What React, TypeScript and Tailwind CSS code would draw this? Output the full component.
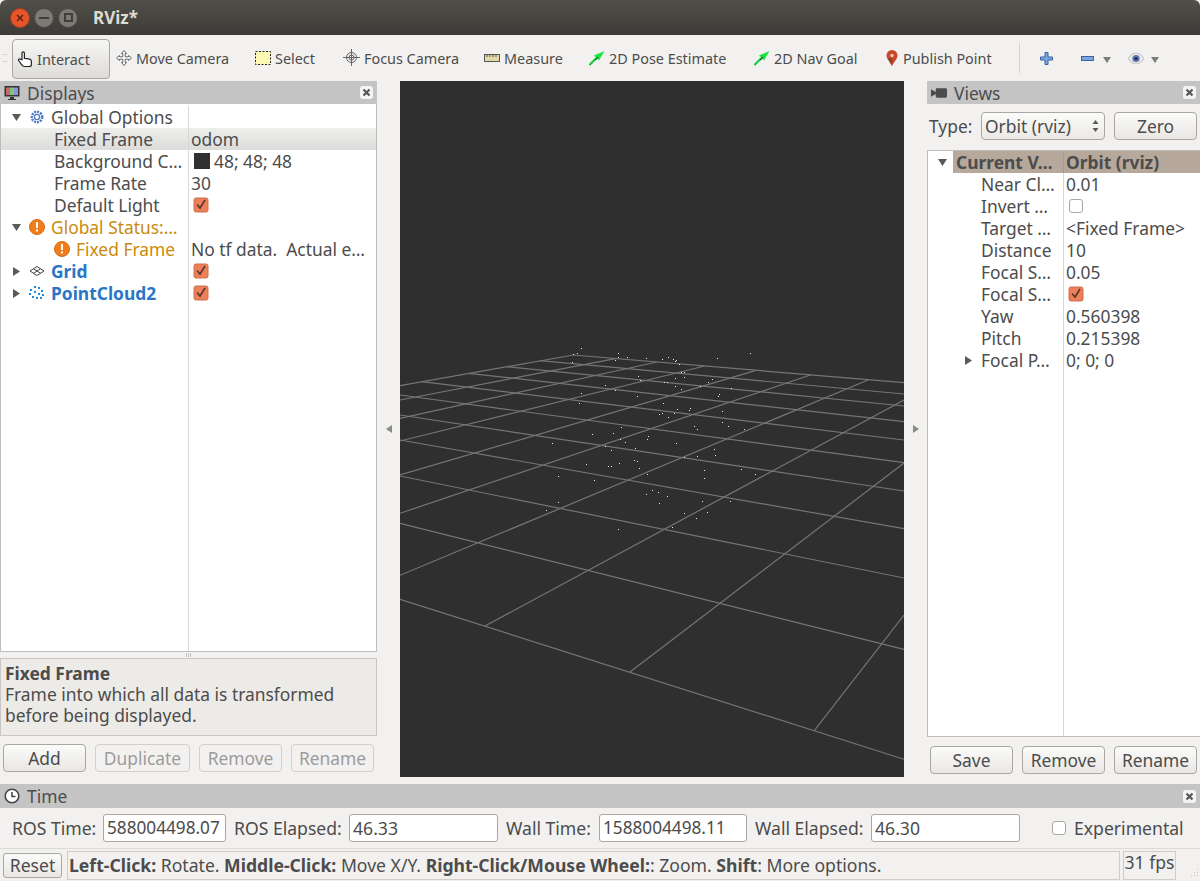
import type { ReactNode } from 'react';

const FONT = "font-['Noto_Sans','Open_Sans',sans-serif]";

// grid lines, screen coordinates inside the 3d view
const GRID_LINES = [
  [573.3, 355, 904, 382.7], [540, 360.7, 904, 394], [506.7, 366.7, 904, 406], [468.3, 373.3, 904, 421.7],
  [421.7, 381.7, 904, 440], [400, 395, 904, 462.7], [400, 415, 904, 491], [400, 440, 904, 528.7],
  [400, 476, 904, 578], [400, 523.3, 904, 649.3], [400, 599.3, 904, 759.3],
  [400, 385.7, 573.3, 355], [400, 400, 616.7, 358.3], [400, 418.3, 657, 362], [400, 441, 704.7, 366],
  [400, 475, 755.3, 370.7], [400, 513.3, 810.3, 375], [400, 575.3, 868, 380], [485, 626, 904, 400],
  [630, 672, 904, 463], [814.3, 730.7, 904, 615],
];

const POINTS = [
  [581, 348], [573, 354], [577, 353], [618, 353], [618, 357], [615, 360], [627, 357], [646, 358], [572, 362],
  [638, 376], [640, 380], [605, 385], [615, 390], [581, 393], [637, 396], [579, 403], [621, 427], [592, 434],
  [613, 433], [620, 439], [648, 436], [647, 439], [625, 442], [552, 443], [605, 446], [635, 448], [611, 450],
  [619, 463], [634, 460], [637, 461], [586, 464], [608, 466], [611, 466], [662, 359], [668, 357], [673, 359],
  [675, 361], [676, 360], [679, 364], [717, 358], [750, 353], [681, 372], [684, 372], [675, 378], [684, 377],
  [712, 379], [708, 382], [664, 382], [667, 382], [675, 386], [681, 389], [700, 386], [731, 388], [719, 394],
  [718, 396], [663, 403], [677, 409], [690, 408], [689, 410], [722, 411], [662, 413], [659, 414], [674, 413],
  [668, 417], [722, 422], [694, 426], [697, 429], [728, 426], [744, 429], [676, 443], [714, 449], [697, 456],
  [715, 455], [684, 457], [704, 470], [741, 469], [558, 502], [546, 510], [659, 503], [702, 501], [730, 501],
  [684, 513], [707, 512], [696, 518], [618, 529], [672, 527], [558, 476], [594, 480], [647, 474], [704, 478],
  [755, 474], [646, 494], [652, 490], [658, 492], [667, 496], [639, 468],
];

function Triangle({ dir }: { dir: 'down' | 'right' }) {
  return (
    <svg width="9" height="9" viewBox="0 0 9 9" className="shrink-0">
      {dir === 'down' ? <path d="M0 1h9L4.5 8z" fill="#5a5a56" /> : <path d="M1 0v9l7-4.5z" fill="#5a5a56" />}
    </svg>
  );
}

function Check() {
  return (
    <svg width="16" height="16" viewBox="0 0 16 16" className="shrink-0">
      <rect x="1" y="1" width="14" height="14" rx="2" fill="#ef7f58" stroke="#c9704f" />
      <path d="M4 7.5l3 3.5 5-8" fill="none" stroke="#5a3a30" strokeWidth="1.7" />
    </svg>
  );
}

function Warn() {
  return (
    <svg width="16" height="16" viewBox="0 0 16 16" className="shrink-0">
      <circle cx="8" cy="8" r="7.5" fill="#f07d1c" stroke="#d96a10" />
      <rect x="7" y="3" width="2" height="6" fill="#fff" />
      <rect x="7" y="10.5" width="2" height="2" fill="#fff" />
    </svg>
  );
}

function CloseBtn() {
  return (
    <div className="w-[13px] h-[13px] rounded-[3px] bg-[#f4f4f4] flex items-center justify-center">
      <svg width="9" height="9" viewBox="0 0 9 9">
        <path d="M1.5 1.5l6 6M7.5 1.5l-6 6" stroke="#555" strokeWidth="2.2" />
      </svg>
    </div>
  );
}

function PanelHeader({ icon, title }: { icon: ReactNode; title: string }) {
  return (
    <div className="h-[23px] shrink-0 bg-[#c4c4c4] flex items-center pl-[4px] pr-[4px] text-[#4c4c4c] text-[17.4px]">
      <div className="w-[16px] flex justify-center">{icon}</div>
      <span className="ml-[7px] mt-[2px] flex-1">{title}</span>
      <CloseBtn />
    </div>
  );
}

function Btn({ children, w, off }: { children: ReactNode; w: string; off?: boolean }) {
  return (
    <div
      className={`${w} h-[28px] shrink-0 rounded-[4px] border flex items-center justify-center text-[17.4px] bg-linear-to-b ${
        off ? 'border-[#d2d0cc] from-[#f2f1f0] to-[#f2f1f0] text-[#9c9c9c]' : 'border-[#a9a7a3] from-[#fbfbfa] to-[#e9e7e4] text-[#4c4c4c]'
      }`}
    >
      {children}
    </div>
  );
}

function ToolItem({ w, cell = 'w-[16px]', icon, label }: { w: string; cell?: string; icon: ReactNode; label: string }) {
  return (
    <div className={`${w} shrink-0 flex items-center gap-[4px]`}>
      <div className={`${cell} h-[16px] flex items-center justify-center shrink-0`}>{icon}</div>
      <span className="mt-[2px]">{label}</span>
    </div>
  );
}

function GreenArrow() {
  return (
    <svg width="16" height="16" viewBox="0 0 16 16">
      <path d="M0.500 15L7 8.500" stroke="#11c93a" strokeWidth="2" />
      <path d="M15.500 1L5 5.500 10 10.500z" fill="#19e63f" />
      <path d="M6 10l3-3" stroke="#0a6b20" strokeWidth="1.2" />
    </svg>
  );
}

function Row({
  indent = 0,
  arrow,
  icon,
  label,
  labelClass = '',
  value,
  col,
  rowClass = '',
}: {
  indent?: number;
  arrow?: 'down' | 'right';
  icon?: ReactNode;
  label: string;
  labelClass?: string;
  value?: ReactNode;
  col: string;
  rowClass?: string;
}) {
  return (
    <div className={`h-[22px] shrink-0 flex items-center whitespace-pre ${rowClass}`}>
      <div className={`${col} shrink-0 h-full border-r border-[#d8d8d8] flex items-center overflow-hidden`}>
        <div className="shrink-0" style={{ width: indent }} />
        {arrow && <div className="w-[16px] shrink-0 flex justify-center"><Triangle dir={arrow} /></div>}
        {icon && <div className={`w-[16px] mr-[6px] shrink-0 flex justify-center ${arrow ? 'ml-[5px]' : ''}`}>{icon}</div>}
        <span className={labelClass}>{label}</span>
      </div>
      <div className="pl-[2px] flex items-center gap-[4px] overflow-hidden">{value}</div>
    </div>
  );
}

export default function App() {
  const leftCol = 'w-[188px]';
  const rightCol = 'w-[136px]';
  return (
    <div className={`${FONT} w-[1200px] h-[881px] flex flex-col overflow-hidden bg-[#f2f1f0] text-[#4c4c4c]`}>
      {/* title bar */}
      <div className="h-[35px] shrink-0 flex items-center pl-[10px] bg-linear-to-b from-[#504f49] to-[#3c3b37] rounded-t-[6px]">
        <div className="w-[20px] h-[20px] rounded-full bg-[#e4552c] border border-[#a53d1e] flex items-center justify-center">
          <svg width="8" height="8" viewBox="0 0 8 8"><path d="M1 1l6 6M7 1L1 7" stroke="#5a1d0a" strokeWidth="1.4" /></svg>
        </div>
        <div className="ml-[4px] w-[20px] h-[20px] rounded-full bg-[#7b7a75] border border-[#4a4945] flex items-center justify-center">
          <div className="w-[10px] h-[2px] bg-[#3f3e3a]" />
        </div>
        <div className="ml-[4px] w-[20px] h-[20px] rounded-full bg-[#7b7a75] border border-[#4a4945] flex items-center justify-center">
          <div className="w-[9px] h-[9px] border-2 border-[#3f3e3a]" />
        </div>
        <span className="ml-[15px] text-[#dfdbd2] font-bold text-[17px]">RViz*</span>
      </div>

      {/* toolbar */}
      <div className="h-[46px] shrink-0 flex items-center text-[14.4px] pl-[3px]">
        <div className="w-[4px] h-[8px] border-y border-[#d5d3cf] mr-[5px]" />
        <div className="w-[98px] h-[40px] shrink-0 mt-[2px] rounded-[4px] border border-[#a9a7a3] bg-linear-to-b from-[#f6f6f5] to-[#dedcd9] flex items-center pl-[3px] gap-[3px]">
          <svg width="18" height="18" viewBox="0 0 24 24" fill="#fff" stroke="#222" strokeWidth="1.6">
            <path d="M8 13V4a1.600 1.600 0 013.200 0v7l7 1.200c1.500.3 2.300 1.300 2.300 2.800v4c0 1.500-1 3-2.500 3h-7c-1.500 0-2.500-1-3.500-2.500L3.500 14c-1-1.800 1.500-3 2.700-1.600z" />
          </svg>
          <span className="mt-[1px]">Interact</span>
        </div>
        <div className="w-[6px] shrink-0" />
        <ToolItem
          w="w-[139px]"
          label="Move Camera"
          icon={
            <svg width="16" height="16" viewBox="0 0 16 16" fill="#fff" stroke="#555" strokeWidth="0.9">
              <path d="M8 .5l2.500 3H9.200v3.300h3.300V5.500l3 2.500-3 2.500V9.200H9.200v3.300h1.300L8 15.500l-2.500-3h1.300V9.200H3.500v1.300L.5 8l3-2.500v1.300h3.300V3.500H5.500z" />
            </svg>
          }
        />
        <ToolItem
          w="w-[88px]"
          label="Select"
          icon={
            <svg width="16" height="14" viewBox="0 0 16 14">
              <rect x="0.5" y="0.5" width="15" height="13" fill="#fdf8b4" stroke="#222" strokeDasharray="2 1.5" />
            </svg>
          }
        />
        <ToolItem
          w="w-[141px]"
          cell="w-[17px]"
          label="Focus Camera"
          icon={
            <svg width="17" height="17" viewBox="0 0 17 17" fill="none" stroke="#666">
              <circle cx="8.5" cy="8.5" r="5" fill="#eee" />
              <path d="M8.500 0v17M0 8.500h17" />
              <circle cx="8.5" cy="8.5" r="2.5" />
            </svg>
          }
        />
        <ToolItem
          w="w-[105px]"
          label="Measure"
          icon={
            <svg width="16" height="8" viewBox="0 0 16 8">
              <rect x="0.5" y="0.5" width="15" height="7" fill="#e3d9a8" stroke="#555" />
              <path d="M3 1v2M6 1v2M9 1v2M12 1v2" stroke="#555" />
            </svg>
          }
        />
        <ToolItem w="w-[165px]" label="2D Pose Estimate" icon={<GreenArrow />} />
        <ToolItem w="w-[131px]" label="2D Nav Goal" icon={<GreenArrow />} />
        <ToolItem
          w="w-[134px]"
          cell="w-[14px]"
          label="Publish Point"
          icon={
            <svg width="12" height="16" viewBox="0 0 12 16">
              <path d="M6 0a5.500 5.500 0 015.500 5.500C11.500 9 8 12 6 16 4 12 .5 9 .5 5.500A5.500 5.500 0 016 0z" fill="#c9472b" />
              <path d="M6 8L6 16C4 12 3 10 2 8z" fill="#7a4a30" />
              <circle cx="6" cy="5.5" r="1.8" fill="#f2c4b4" />
            </svg>
          }
        />
        <div className="w-px h-[30px] bg-[#d6d4d0] shrink-0" />
        <div className="w-[20px] shrink-0" />
        <svg width="13" height="13" viewBox="0 0 13 13" className="shrink-0">
          <path d="M5 .5h3v4.500h4.500v3H8v4.500H5V8H.5V5H5z" fill="#7ea6dc" stroke="#3465a4" />
        </svg>
        <div className="w-[28px] shrink-0" />
        <svg width="13" height="5" viewBox="0 0 13 5" className="shrink-0">
          <rect x="0.5" y="0.5" width="12" height="4" fill="#7ea6dc" stroke="#3465a4" />
        </svg>
        <div className="w-[9px] shrink-0" />
        <svg width="8" height="6" viewBox="0 0 8 6" className="shrink-0 mt-[4px]"><path d="M0 0h8L4 6z" fill="#7b7b78" /></svg>
        <div className="w-[17px] shrink-0" />
        <svg width="16" height="11" viewBox="0 0 16 11" className="shrink-0">
          <path d="M0 5.500C3 1 6 0 8 0s5 1 8 5.500C13 10 10 11 8 11S3 10 0 5.500z" fill="#e8e8e8" stroke="#999" strokeWidth="0.6" />
          <circle cx="8" cy="5.5" r="3.6" fill="#5b74b5" />
          <circle cx="8" cy="5.5" r="1.6" fill="#1d2a4f" />
        </svg>
        <div className="w-[7px] shrink-0" />
        <svg width="8" height="6" viewBox="0 0 8 6" className="shrink-0 mt-[4px]"><path d="M0 0h8L4 6z" fill="#7b7b78" /></svg>
      </div>

      {/* main area */}
      <div className="h-[703px] shrink-0 flex items-start">
        {/* displays */}
        <div className="w-[377px] h-full shrink-0 flex flex-col text-[17.4px]">
          <PanelHeader
            title="Displays"
            icon={
              <svg width="16" height="16" viewBox="0 0 16 16">
                <rect x="0.5" y="1" width="15" height="10.5" fill="#333" />
                <rect x="2" y="2.5" width="4" height="7.5" fill="#c96a6a" />
                <rect x="6" y="2.5" width="4" height="7.5" fill="#83c27a" />
                <rect x="10" y="2.5" width="4" height="7.5" fill="#8a93d8" />
                <path d="M6 12h4v2h2v1H4v-1h2z" fill="#333" />
              </svg>
            }
          />
          <div className="h-[548px] shrink-0 bg-white border border-[#bdbdbd] border-t-0 pt-[2px] flex flex-col">
            <Row
              col={leftCol}
              indent={7}
              arrow="down"
              icon={
                <svg width="16" height="16" viewBox="0 0 16 16" fill="none">
                  <circle cx="8" cy="8" r="5.2" stroke="#4a78c2" strokeWidth="2.4" strokeDasharray="2 1" />
                  <circle cx="8" cy="8" r="2.6" stroke="#4a78c2" strokeWidth="1.2" />
                </svg>
              }
              label="Global Options"
            />
            <Row
              col={leftCol}
              rowClass="bg-linear-to-b from-[#eeeeec] to-[#dcdcda]"
              indent={53}
              label="Fixed Frame"
              value={<span>odom</span>}
            />
            <Row
              col={leftCol}
              indent={53}
              label="Background C…"
              value={
                <>
                  <div className="w-[16px] h-[16px] bg-[#303030] ml-[3px]" />
                  <span>48; 48; 48</span>
                </>
              }
            />
            <Row col={leftCol} indent={53} label="Frame Rate" value={<span>30</span>} />
            <Row col={leftCol} indent={53} label="Default Light" value={<div className="ml-[2px]"><Check /></div>} />
            <Row
              col={leftCol}
              indent={7}
              arrow="down"
              icon={<Warn />}
              label="Global Status:…"
              labelClass="text-[#cb8a0c]"
            />
            <Row
              col={leftCol}
              indent={53}
              icon={<Warn />}
              label="Fixed Frame"
              labelClass="text-[#cb8a0c]"
              value={<span>No tf data.  Actual e…</span>}
            />
            <Row
              col={leftCol}
              indent={7}
              arrow="right"
              icon={
                <svg width="16" height="10" viewBox="0 0 16 10" fill="none" stroke="#444">
                  <path d="M8 .5L15 5l-7 4.500L1 5zM4.500 2.800l7 4.500M11.500 2.800l-7 4.500" />
                </svg>
              }
              label="Grid"
              labelClass="font-bold text-[#2a76c6]"
              value={<div className="ml-[2px]"><Check /></div>}
            />
            <Row
              col={leftCol}
              indent={7}
              arrow="right"
              icon={
                <svg width="16" height="14" viewBox="0 0 16 14" fill="#1e8be0">
                  <rect x="5" y="0" width="2" height="2" /><rect x="9" y="1" width="2" height="2" />
                  <rect x="1" y="3" width="2" height="2" /><rect x="12" y="4" width="2" height="2" />
                  <rect x="5" y="5" width="2" height="2" /><rect x="0" y="7" width="2" height="2" />
                  <rect x="9" y="7" width="2" height="2" /><rect x="13" y="8" width="2" height="2" />
                  <rect x="3" y="10" width="2" height="2" /><rect x="7" y="11" width="2" height="2" />
                  <rect x="11" y="11" width="2" height="2" />
                </svg>
              }
              label="PointCloud2"
              labelClass="font-bold text-[#2a76c6]"
              value={<div className="ml-[2px]"><Check /></div>}
            />
            <div className="flex-1 flex">
              <div className={`${leftCol} border-r border-[#d8d8d8]`} />
            </div>
          </div>
          <div className="h-[6px] shrink-0 flex justify-center items-center gap-[1px]">
            <div className="w-px h-[4px] bg-[#c8c6c2]" /><div className="w-px h-[4px] bg-[#c8c6c2]" /><div className="w-px h-[4px] bg-[#c8c6c2]" />
          </div>
          <div className="h-[78px] shrink-0 bg-[#edebe7] border border-[#c9c7c3] pl-[4px] pt-[4px] leading-[21px]">
            <div className="font-bold">Fixed Frame</div>
            <div>Frame into which all data is transformed</div>
            <div>before being displayed.</div>
          </div>
          <div className="flex pl-[3px] pt-[8px] gap-[9px]">
            <Btn w="w-[83px]">Add</Btn>
            <Btn w="w-[95px]" off>Duplicate</Btn>
            <Btn w="w-[83px]" off>Remove</Btn>
            <Btn w="w-[83px]" off>Rename</Btn>
          </div>
        </div>

        {/* left dock handle */}
        <div className="w-[23px] h-[696px] shrink-0 flex items-center justify-center">
          <svg width="6" height="8" viewBox="0 0 6 8"><path d="M6 0v8L0 4z" fill="#8a8a86" /></svg>
        </div>

        {/* 3d view */}
        <div className="w-[504px] h-[696px] shrink-0 bg-[#2f2f2f]">
          <svg width="504" height="696" viewBox="400 81 504 696" className="block">
            {GRID_LINES.map((l, i) => (
              <line key={i} x1={l[0]} y1={l[1]} x2={l[2]} y2={l[3]} stroke="#757575" strokeWidth="1.2" />
            ))}
            {POINTS.map((p, i) => (
              <rect key={i} x={p[0]} y={p[1]} width="1" height="1" fill="#e8e8e8" />
            ))}
          </svg>
        </div>

        {/* right dock handle */}
        <div className="w-[23px] h-[696px] shrink-0 flex items-center justify-center">
          <svg width="6" height="8" viewBox="0 0 6 8"><path d="M0 0v8l6-4z" fill="#8a8a86" /></svg>
        </div>

        {/* views */}
        <div className="w-[273px] h-full shrink-0 flex flex-col text-[17.4px]">
          <PanelHeader
            title="Views"
            icon={
              <svg width="17" height="10" viewBox="0 0 17 10" fill="#4c4c4c">
                <path d="M0 1l5 3V1.500A1.500 1.500 0 016.500 0h9A1.500 1.500 0 0117 1.500v7a1.500 1.500 0 01-1.500 1.500h-9A1.500 1.500 0 015 8.500V6L0 9z" />
              </svg>
            }
          />
          <div className="h-[46px] shrink-0 flex items-center pl-[2px] pb-[2px]">
            <span className="w-[52px]">Type:</span>
            <div className="w-[124px] h-[28px] rounded-[4px] border border-[#a9a7a3] bg-linear-to-b from-[#fbfbfa] to-[#ebe9e6] flex items-center pl-[3px] pr-[5px] justify-between">
              <span>Orbit (rviz)</span>
              <svg width="7" height="14" viewBox="0 0 7 14" fill="#5a5a56"><path d="M3.500 1l3 4h-6zM3.500 13l3-4h-6z" /></svg>
            </div>
            <div className="w-[9px]" />
            <Btn w="w-[83px]">Zero</Btn>
          </div>
          <div className="h-[587px] shrink-0 bg-white border border-[#bdbdbd] border-r-0 flex flex-col">
            <div className="h-[22px] shrink-0 flex items-center whitespace-nowrap font-bold">
              <div className="w-[25px] shrink-0 flex justify-center pl-[4px]"><Triangle dir="down" /></div>
              <div className="w-[111px] h-full shrink-0 bg-[#b7a89c] border-r border-[#a99a8e] pl-[3px] flex items-center overflow-hidden">Current V…</div>
              <div className="flex-1 h-full bg-[#b7a89c] pl-[2px] flex items-center">Orbit (rviz)</div>
            </div>
            <Row col={rightCol} indent={53} label="Near Cl…" value={<span>0.01</span>} />
            <Row
              col={rightCol}
              indent={53}
              label="Invert …"
              value={<div className="ml-[3px] w-[14px] h-[14px] rounded-[3px] border border-[#a9a7a3] bg-white" />}
            />
            <Row col={rightCol} indent={53} label="Target …" value={<span>&lt;Fixed Frame&gt;</span>} />
            <Row col={rightCol} indent={53} label="Distance" value={<span>10</span>} />
            <Row col={rightCol} indent={53} label="Focal S…" value={<span>0.05</span>} />
            <Row col={rightCol} indent={53} label="Focal S…" value={<div className="ml-[2px]"><Check /></div>} />
            <Row col={rightCol} indent={53} label="Yaw" value={<span>0.560398</span>} />
            <Row col={rightCol} indent={53} label="Pitch" value={<span>0.215398</span>} />
            <Row col={rightCol} indent={32} arrow="right" label="Focal P…" labelClass="ml-[5px]" value={<span>0; 0; 0</span>} />
            <div className="flex-1 flex">
              <div className={`${rightCol} border-r border-[#d8d8d8]`} />
            </div>
          </div>
          <div className="flex pl-[3px] pt-[9px] gap-[9px]">
            <Btn w="w-[83px]">Save</Btn>
            <Btn w="w-[83px]">Remove</Btn>
            <Btn w="w-[83px]">Rename</Btn>
          </div>
        </div>
      </div>

      {/* time panel */}
      <div className="h-[24px] shrink-0 bg-[#c4c4c4] flex items-center pl-[4px] pr-[4px] text-[17.4px]">
        <svg width="16" height="16" viewBox="0 0 16 16" fill="#fff" stroke="#444" strokeWidth="1.6">
          <circle cx="8" cy="8" r="6.8" />
          <path d="M8 4v4.500h3.500" fill="none" />
        </svg>
        <span className="ml-[7px] flex-1">Time</span>
        <CloseBtn />
      </div>
      <div className="h-[40px] shrink-0 flex items-center text-[17.6px] whitespace-nowrap pl-[12px]">
        <span className="w-[91px] shrink-0">ROS Time:</span>
        <div className="w-[123px] h-[28px] shrink-0 rounded-[3px] border border-[#a9a7a3] bg-white pl-[3px] flex items-center overflow-hidden text-[17.2px]">588004498.07</div>
        <span className="w-[123px] shrink-0 pl-[8px]">ROS Elapsed:</span>
        <div className="w-[149px] h-[28px] shrink-0 rounded-[3px] border border-[#a9a7a3] bg-white pl-[3px] flex items-center">46.33</div>
        <span className="w-[101px] shrink-0 pl-[8px]">Wall Time:</span>
        <div className="w-[148px] h-[28px] shrink-0 rounded-[3px] border border-[#a9a7a3] bg-white pl-[3px] flex items-center overflow-hidden text-[17.2px]">1588004498.11</div>
        <span className="w-[124px] shrink-0 pl-[8px]">Wall Elapsed:</span>
        <div className="w-[149px] h-[28px] shrink-0 rounded-[3px] border border-[#a9a7a3] bg-white pl-[3px] flex items-center">46.30</div>
        <div className="ml-[32px] w-[14px] h-[14px] rounded-[3px] border border-[#a9a7a3] bg-white shrink-0" />
        <span className="ml-[8px]">Experimental</span>
      </div>
      <div className="h-[33px] shrink-0 flex items-center pl-[3px] text-[17.6px] whitespace-nowrap border-t border-[#dcdad6]">
        <div className="w-[59px] h-[25px] shrink-0 rounded-[3px] border border-[#a9a7a3] bg-linear-to-b from-[#fbfbfa] to-[#e9e7e4] flex items-center justify-center">Reset</div>
        <div className="w-[5px] shrink-0" />
        <div className="w-[1053px] h-[29px] shrink-0 border border-[#cfcdc9] pl-[1px] flex items-center overflow-hidden">
          <b>Left-Click:</b>&nbsp;Rotate.&nbsp;<b>Middle-Click:</b>&nbsp;Move X/Y.&nbsp;<b>Right-Click/Mouse Wheel:</b>:&nbsp;Zoom.&nbsp;<b>Shift</b>:&nbsp;More options.
        </div>
        <div className="w-[3px] shrink-0" />
        <div className="w-[53px] h-[29px] shrink-0 border border-[#cfcdc9] flex items-start justify-center leading-[20px]">31 fps</div>
        <svg width="10" height="10" viewBox="0 0 10 10" fill="#c4c2be" className="ml-[13px] mt-[16px] shrink-0">
          <rect x="8" y="1" width="1" height="1" /><rect x="5" y="4" width="1" height="1" /><rect x="8" y="4" width="1" height="1" />
          <rect x="2" y="7" width="1" height="1" /><rect x="5" y="7" width="1" height="1" /><rect x="8" y="7" width="1" height="1" />
        </svg>
      </div>
    </div>
  );
}
